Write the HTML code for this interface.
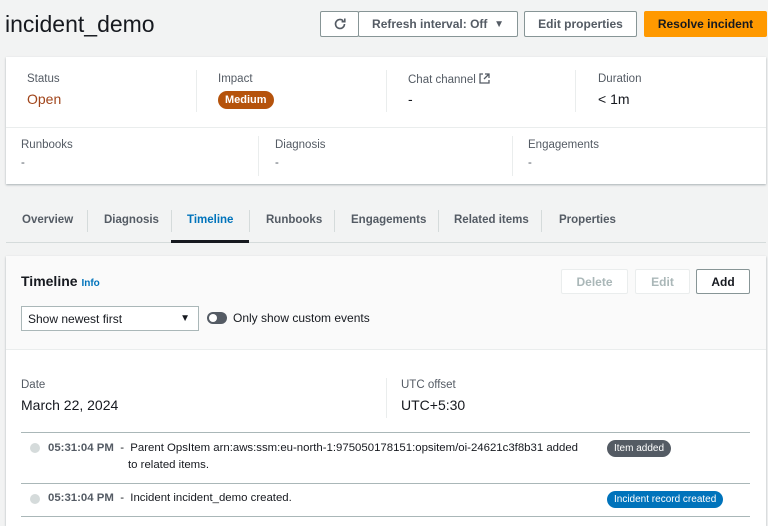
<!DOCTYPE html>
<html><head><meta charset="utf-8"><style>
*{box-sizing:border-box;margin:0;padding:0}
body{width:768px;height:519px;overflow:hidden;background:#f2f3f3;font-family:"Liberation Sans",sans-serif;color:#16191f;position:relative}
.a{position:absolute;white-space:nowrap}
.btn{position:absolute;border:1px solid #879596;background:#fff;border-radius:2px;font-size:12px;font-weight:bold;color:#545b64;display:flex;align-items:center;justify-content:center}
.lbl{font-size:11.5px;color:#545b64}
.vl{position:absolute;width:1px;background:#eaeded}
.hl{position:absolute;height:1px;background:#aab7b8}
</style></head><body>
<div class="a" style="left:5px;top:11px;font-size:23px">incident_demo</div>
<div class="btn" style="left:320px;top:11px;width:39px;height:26px"><svg width="14" height="14" viewBox="0 0 14 14"><path d="M11.5 7a4.5 4.5 0 1 1-1.3-3.2" fill="none" stroke="#545b64" stroke-width="1.6"/><path d="M11.8 1.5v3.2H8.6" fill="none" stroke="#545b64" stroke-width="1.6"/></svg></div>
<div class="btn" style="left:358px;top:11px;width:160px;height:26px">Refresh interval: Off&nbsp;&nbsp;<span style="font-size:10px">▼</span></div>
<div class="btn" style="left:524px;top:11px;width:113px;height:26px">Edit properties</div>
<div class="btn" style="left:644px;top:11px;width:123px;height:26px;background:#ff9900;border-color:#ff9900;color:#16191f">Resolve incident</div>

<div class="a" style="left:6px;top:57px;width:760px;height:127px;background:#fff;box-shadow:0 1px 2px rgba(0,28,36,.3)"></div>
<div class="hl" style="left:6px;top:127px;width:760px;background:#eaeded"></div>
<div class="vl" style="left:196px;top:70px;height:42px"></div>
<div class="vl" style="left:386px;top:70px;height:42px"></div>
<div class="vl" style="left:575px;top:70px;height:42px"></div>
<div class="vl" style="left:258px;top:136px;height:40px"></div>
<div class="vl" style="left:512px;top:136px;height:40px"></div>
<div class="a lbl" style="left:27px;top:73px">Status</div>
<div class="a" style="left:27px;top:91px;font-size:14px;color:#a0441a">Open</div>
<div class="a lbl" style="left:218px;top:73px">Impact</div>
<div class="a" style="left:218px;top:91px;background:#b5530c;color:#fff;font-size:11px;font-weight:bold;border-radius:10px;padding:3px 7px">Medium</div>
<div class="a lbl" style="left:408px;top:73px">Chat channel <svg width="11" height="11" viewBox="0 0 11 11" style="vertical-align:-1px"><path d="M4 1H1v9h9V7M6 1h4v4M10 1L5 6" fill="none" stroke="#545b64" stroke-width="1.3"/></svg></div>
<div class="a" style="left:408px;top:91px;font-size:14px">-</div>
<div class="a lbl" style="left:598px;top:73px">Duration</div>
<div class="a" style="left:598px;top:91px;font-size:14px">&lt; 1m</div>
<div class="a lbl" style="left:21px;top:139px">Runbooks</div>
<div class="a lbl" style="left:21px;top:157px">-</div>
<div class="a lbl" style="left:275px;top:139px">Diagnosis</div>
<div class="a lbl" style="left:275px;top:157px">-</div>
<div class="a lbl" style="left:528px;top:139px">Engagements</div>
<div class="a lbl" style="left:528px;top:157px">-</div>

<div class="hl" style="left:6px;top:242px;width:760px;height:1px;background:#d5dbdb"></div>
<div class="a" style="left:171px;top:240px;width:78px;height:3px;background:#16191f"></div>
<div class="a" style="top:214px;left:0;font-size:11.5px;font-weight:bold;color:#545b64">
<span class="a" style="left:22px">Overview</span><span class="a" style="left:104px">Diagnosis</span><span class="a" style="left:187px;color:#0073bb">Timeline</span><span class="a" style="left:266px">Runbooks</span><span class="a" style="left:351px">Engagements</span><span class="a" style="left:454px">Related items</span><span class="a" style="left:559px">Properties</span></div>
<div class="vl" style="left:87px;top:210px;height:22px;background:#d5dbdb"></div>
<div class="vl" style="left:171px;top:210px;height:22px;background:#d5dbdb"></div>
<div class="vl" style="left:249px;top:210px;height:22px;background:#d5dbdb"></div>
<div class="vl" style="left:334px;top:210px;height:22px;background:#d5dbdb"></div>
<div class="vl" style="left:438px;top:210px;height:22px;background:#d5dbdb"></div>
<div class="vl" style="left:541px;top:210px;height:22px;background:#d5dbdb"></div>

<div class="a" style="left:6px;top:256px;width:760px;height:270px;background:#fff;box-shadow:0 1px 2px rgba(0,28,36,.3)"></div>
<div class="a" style="left:6px;top:256px;width:760px;height:94px;background:#fafafa;border-bottom:1px solid #eaeded"></div>
<div class="a" style="left:21px;top:273px;font-size:14px;font-weight:bold">Timeline <span style="font-size:10px;color:#0073bb">Info</span></div>
<div class="btn" style="left:561px;top:269px;width:67px;height:25px;border-color:#eaeded;color:#aab7b8">Delete</div>
<div class="btn" style="left:635px;top:269px;width:55px;height:25px;border-color:#eaeded;color:#aab7b8">Edit</div>
<div class="btn" style="left:696px;top:269px;width:54px;height:25px;color:#16191f">Add</div>
<div class="a" style="left:21px;top:306px;width:178px;height:25px;background:#fff;border:1px solid #aab7b8;font-size:12px;padding:5px 6px">Show newest first<span style="position:absolute;right:8px;top:6px;font-size:10px">▼</span></div>
<div class="a" style="left:207px;top:312px;width:20px;height:12px;border-radius:6px;background:#545b64"><div style="position:absolute;left:2px;top:2px;width:8px;height:8px;border-radius:50%;background:#fff"></div></div>
<div class="a" style="left:233px;top:311px;font-size:12px">Only show custom events</div>

<div class="a lbl" style="left:21px;top:379px">Date</div>
<div class="a" style="left:21px;top:397px;font-size:14px">March 22, 2024</div>
<div class="vl" style="left:386px;top:378px;height:40px"></div>
<div class="a lbl" style="left:401px;top:379px">UTC offset</div>
<div class="a" style="left:401px;top:397px;font-size:14px">UTC+5:30</div>
<div class="hl" style="left:21px;top:432px;width:729px"></div>
<div class="hl" style="left:21px;top:483px;width:729px"></div>
<div class="hl" style="left:21px;top:516px;width:729px"></div>
<div class="a" style="left:30px;top:443px;width:10px;height:10px;border-radius:50%;background:#d5dbdb"></div>
<div class="a" style="left:48px;top:440px;font-size:11.4px;line-height:17px"><b style="color:#545b64">05:31:04 PM</b> &nbsp;-&nbsp; Parent OpsItem arn:aws:ssm:eu-north-1:975050178151:opsitem/oi-24621c3f8b31 added</div>
<div class="a" style="left:128px;top:457px;font-size:11.4px;line-height:17px">to related items.</div>
<div class="a" style="left:607px;top:440px;background:#545b64;color:#fff;font-size:10px;border-radius:9px;padding:3px 7px">Item added</div>
<div class="a" style="left:30px;top:494px;width:10px;height:10px;border-radius:50%;background:#d5dbdb"></div>
<div class="a" style="left:48px;top:490px;font-size:11.4px;line-height:17px"><b style="color:#545b64">05:31:04 PM</b> &nbsp;-&nbsp; Incident incident_demo created.</div>
<div class="a" style="left:607px;top:491px;background:#0073bb;color:#fff;font-size:10px;border-radius:9px;padding:3px 7px">Incident record created</div>
</body></html>
